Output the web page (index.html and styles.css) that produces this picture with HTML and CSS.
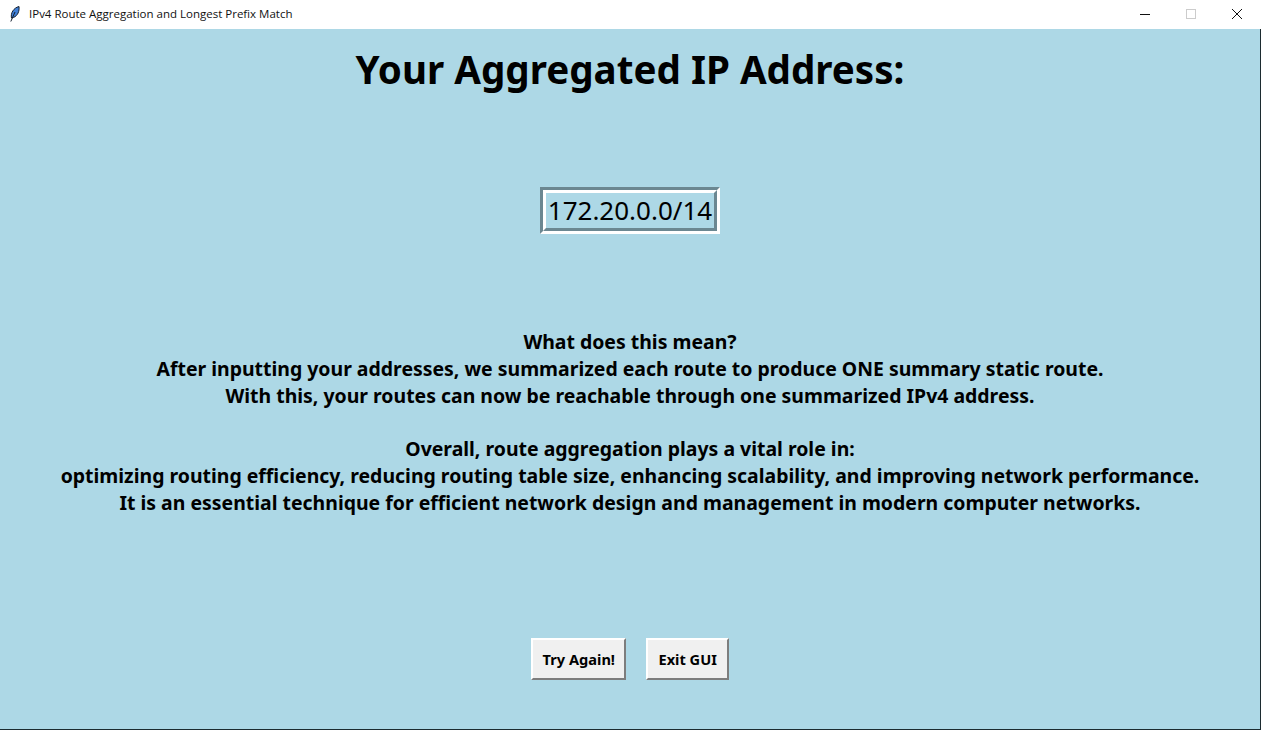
FILE: index.html
```html
<!DOCTYPE html>
<html lang="en">
<head>
  <meta charset="UTF-8" />
  <title>IPv4 Route Aggregation and Longest Prefix Match</title>
  <link rel="stylesheet" href="styles.css">
</head>
<body>

  <div class="titlebar">
    <svg class="feather" width="10" height="16" viewBox="0 0 10 16">
      <path d="M1.500 12 C0.500 7 3.500 2 9 0.500 C9.500 5 8 9.500 3.500 11.500 Z" fill="#3f7fd6" stroke="#14202e" stroke-width="1"/>
      <path d="M0.800 15.500 L5 6" stroke="#14202e" stroke-width="1" fill="none"/>
    </svg>
    <span class="title-text">IPv4 Route Aggregation and Longest Prefix Match</span>
    <div class="window-btns">
      <span class="win-btn"><svg width="12" height="12" viewBox="0 0 12 12"><path d="M1 6.500 H11" stroke="#111" stroke-width="1"/></svg></span>
      <span class="win-btn"><svg width="12" height="12" viewBox="0 0 12 12"><rect x="1.500" y="1.500" width="9" height="9" fill="none" stroke="#ccc"/></svg></span>
      <span class="win-btn"><svg width="12" height="12" viewBox="0 0 12 12"><path d="M1 1 L11 11 M11 1 L1 11" stroke="#111" stroke-width="1"/></svg></span>
    </div>
  </div>

  <main class="content">
    <h1 class="heading">Your Aggregated IP Address:</h1>

    <div class="result-outer">
      <div class="result-inner">172.20.0.0/14</div>
    </div>

    <div class="explain">
      <p>What does this mean?</p>
      <p>After inputting your addresses, we summarized each route to produce ONE summary static route.</p>
      <p>With this, your routes can now be reachable through one summarized IPv4 address.</p>
      <p>&nbsp;</p>
      <p>Overall, route aggregation plays a vital role in:</p>
      <p>optimizing routing efficiency, reducing routing table size, enhancing scalability, and improving network performance.</p>
      <p>It is an essential technique for efficient network design and management in modern computer networks.</p>
    </div>

    <div class="buttons">
      <button class="btn">Try Again!</button>
      <button class="btn btn-exit">Exit GUI</button>
    </div>
  </main>

</body>
</html>
```

FILE: styles.css
```css
html, body {
  margin: 0;
  padding: 0;
  height: 100%;
  overflow: hidden;
}

body {
  display: flex;
  flex-direction: column;
  font-family: 'Noto Sans', sans-serif;
  color: #000;
  background-color: #add8e6;
}

/* TITLE BAR */
.titlebar {
  display: flex;
  align-items: center;
  box-sizing: border-box;
  height: 29px;
  flex-shrink: 0;
  background-color: #fff;
  padding: 0 0 2px 10px;
}

.feather {
  margin-right: 9px;
}

.title-text {
  font-family: 'Open Sans', sans-serif;
  font-size: 11.5px;
  color: #111;
}

.window-btns {
  display: flex;
  margin-left: auto;
  padding-right: 1px;
}

.win-btn {
  display: flex;
  align-items: center;
  justify-content: center;
  width: 46px;
  height: 27px;
}

/* MAIN AREA */
.content {
  flex: 1;
  display: flex;
  flex-direction: column;
  align-items: center;
  border-right: 1px solid #1c2b30;
  border-bottom: 1px solid #1c2b30;
}

.heading {
  margin: 10px 0 0;
  font-size: 38.6px;
  line-height: 60px;
  font-weight: 700;
}

/* groove look, same as the tk entry */
.result-outer {
  margin-top: 88px;
  border: 3px solid;
  border-color: #6b8791 #fff #fff #6b8791;
}

.result-inner {
  border: 3px solid;
  border-color: #fff #6b8791 #6b8791 #fff;
  width: 174px;
  box-sizing: border-box;
  text-align: center;
  font-family: 'Noto Sans', sans-serif;
  font-size: 26px;
  line-height: 35px;
}

.explain {
  margin-top: 95px;
  text-align: center;
  font-size: 19.45px;
  font-weight: 700;
  line-height: 26.8px;
}

.explain p {
  margin: 0;
  white-space: nowrap;
}

.buttons {
  display: flex;
  gap: 20px;
  margin-top: 121px;
}

.btn {
  height: 42px;
  padding: 0 9.5px;
  border: 2px solid;
  border-color: #fff #7d7d7d #7d7d7d #fff;
  background-color: #f0f0f0;
  font-family: 'Noto Sans', sans-serif;
  font-size: 14.6px;
  font-weight: 700;
  color: #000;
}

.btn-exit {
  padding: 0 10px;
}
```
